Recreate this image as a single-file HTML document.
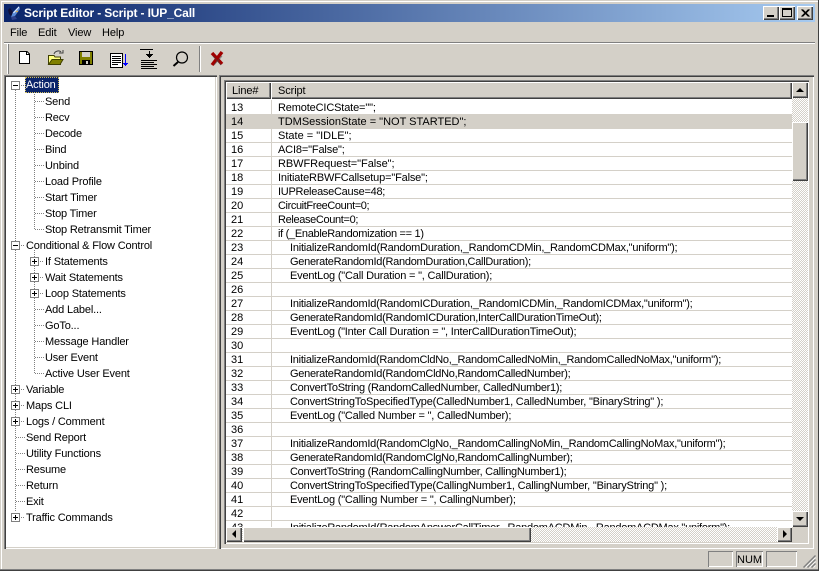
<!DOCTYPE html>
<html><head><meta charset="utf-8"><style>
html,body{margin:0;padding:0;width:819px;height:571px;overflow:hidden;background:#d4d0c8}
body{position:relative;font:11px/14px "Liberation Sans",sans-serif;color:#000}
div,span.a{position:absolute;box-sizing:border-box}
.t{white-space:nowrap}
#title{left:4px;top:4px;width:811px;height:18px;background:linear-gradient(90deg,#0a246a,#a6caf0)}
.cap{left:763px;top:6px;width:16px;height:14px;background:#d4d0c8;box-shadow:inset 1px 1px 0 #fff,inset -1px -1px 0 #404040,inset -2px -2px 0 #808080}
.m{top:26px;letter-spacing:-.1px}
.tree div{height:16px;line-height:16px;white-space:nowrap;letter-spacing:-.16px;margin-top:1px}
.c{left:45px}.p{left:26px}
#rows>div{position:relative;height:14px;border-bottom:1px solid #d4d0c8;white-space:nowrap;line-height:13px;width:566px}
#rows{left:0;top:0;width:566px}
#rows b{font-weight:normal;position:absolute;left:5px;top:1px}
#rows i{font-style:normal;position:absolute;left:52px;top:1px;letter-spacing:-.24px}
#rows i.n{left:64px}
.btn{background:#d4d0c8;box-shadow:inset 1px 1px 0 #fff,inset -1px -1px 0 #404040,inset -2px -2px 0 #808080}
.dith{background:conic-gradient(#fff 25%,#d4d0c8 0 50%,#fff 0 75%,#d4d0c8 0) 0 0/2px 2px}
.pane{top:551px;height:16px;box-shadow:inset 1px 1px 0 #808080,inset -1px -1px 0 #fff}
</style></head><body>
<div style="left:0;top:0;width:819px;height:1px;background:#d4d0c8"></div>
<div style="left:1px;top:1px;width:817px;height:1px;background:#fff"></div>
<div style="left:1px;top:1px;width:1px;height:568px;background:#fff"></div>
<div style="left:818px;top:0;width:1px;height:571px;background:#404040"></div>
<div style="left:0;top:570px;width:819px;height:1px;background:#404040"></div>
<div style="left:0;top:569px;width:818px;height:1px;background:#808080"></div>

<div id="title"></div>
<svg style="position:absolute;left:7px;top:5px" width="14" height="16"><path d="M3 3L6 7L5 12L2 9L1 5Z" fill="#10103a"/><path d="M12 1L6 7L4 12L8 11L13 4Z" fill="#5a8ad8"/><path d="M4 12L8 11L10 14L5 15Z" fill="#30408a"/><path d="M6.5 8L12 2" stroke="#e8f0ff" stroke-width="1"/><path d="M9 7l2-1" stroke="#e8b040"/></svg>
<div class="t" style="left:24px;top:6px;color:#fff;letter-spacing:-.15px;font:bold 12px/15px 'Liberation Sans',sans-serif">Script Editor - Script - IUP_Call</div>
<div class="cap" style="left:763px"><div style="left:4px;top:9px;width:7px;height:2px;background:#000"></div></div>
<div class="cap" style="left:779px"><div style="left:3px;top:2px;width:10px;height:9px;border:1px solid #000;border-top-width:2px"></div></div>
<div class="cap" style="left:797px"><svg style="position:absolute;left:4px;top:3px" width="9" height="8"><path d="M0.5 0.5L7.5 7.5M1.5 0.5L8.5 7.5M7.5 0.5L0.5 7.5M8.5 0.5L1.5 7.5" stroke="#000" stroke-width="1"/></svg></div>

<div class="m t" style="left:10px">File</div>
<div class="m t" style="left:38px">Edit</div>
<div class="m t" style="left:68px">View</div>
<div class="m t" style="left:102px">Help</div>

<div style="left:4px;top:42px;width:811px;height:1px;background:#808080"></div>
<div style="left:4px;top:43px;width:811px;height:1px;background:#fff"></div>
<div style="left:7px;top:44px;width:1px;height:30px;background:#fff"></div>
<div style="left:8px;top:44px;width:1px;height:30px;background:#808080"></div>

<svg style="position:absolute;left:0;top:44px" width="240" height="30" viewBox="0 44 240 30">
<!-- new -->
<path d="M19.5 51.5H27L29.5 54V63.5H19.5Z" fill="#fff" stroke="#000"/><path d="M26.5 51.5V54.5H29.5" fill="none" stroke="#000"/>
<!-- open -->
<path d="M48.5 55.5H54L55 57H60.5V64.5H48.5Z" fill="#ffff80" stroke="#404000"/>
<path d="M48.5 64.5L52 59.5H63L60 64.5Z" fill="#808000" stroke="#404000"/>
<path d="M54 54C55 51 59 50 61 52" fill="none" stroke="#404040"/><path d="M59 53H63V50" fill="none" stroke="#404040"/>
<!-- save -->
<path d="M79.5 51.5H92.5V64.5H79.5Z" fill="#808000" stroke="#000"/>
<rect x="82" y="52" width="8" height="5" fill="#d4d0c8"/><rect x="82" y="60" width="8" height="4" fill="#000"/><rect x="86" y="61" width="2" height="3" fill="#d4d0c8"/>
<!-- list+arrow -->
<path d="M110.5 53.5H122.5V67.5H110.5Z" fill="#fff" stroke="#000"/>
<path d="M112 56.5H121M112 58.5H121M112 60.5H121M112 62.5H121M112 64.5H118" stroke="#000"/>
<path d="M125.5 54V66" stroke="#0000ff"/><path d="M123 63.5H128M124 64.5H127M125 65.5H126" stroke="#0000ff" stroke-width="1"/>
<!-- indent -->
<path d="M140 49.5H153" stroke="#000"/>
<path d="M149.5 51V56" stroke="#000"/><path d="M146 54.5H153M147 55.5H152M148 56.5H151M149 57.5H150" stroke="#000"/>
<path d="M141 60.5H157M141 62.5H154M141 64.5H157M141 66.5H154M141 68.5H157" stroke="#000"/>
<!-- magnifier -->
<circle cx="182" cy="57.5" r="5.5" fill="none" stroke="#000" stroke-width="1.2"/><path d="M178 62L173.5 66" stroke="#000" stroke-width="2"/>
<!-- sep -->
<rect x="199" y="46" width="1" height="26" fill="#808080"/><rect x="200" y="46" width="1" height="26" fill="#fff"/>
<!-- red x -->
<path d="M212 53L222 64M222 52L212 65" stroke="#a00000" stroke-width="3.4"/><path d="M213 56L221 65M214 65L222 56" stroke="#404040" stroke-width="1" opacity=".55"/>
</svg>

<!-- Tree panel -->
<div style="left:4px;top:75px;width:213px;height:474px;background:#fff;box-shadow:inset 1px 1px 0 #808080,inset 2px 2px 0 #404040,inset -1px -1px 0 #fff,inset -2px -2px 0 #d4d0c8"></div>
<div class="tree" style="left:0;top:0;width:216px;height:548px">
<svg style="position:absolute;left:0;top:0" width="216" height="548">
<path d="M15.5 90V512M34.5 92V229M34.5 250V373" stroke="#808080" stroke-dasharray="1 1" fill="none" shape-rendering="crispEdges"/>
<path d="M21 85.5H25M35 101.5H44M35 117.5H44M35 133.5H44M35 149.5H44M35 165.5H44M35 181.5H44M35 197.5H44M35 213.5H44M35 229.5H44M21 245.5H25M40 261.5H44M40 277.5H44M40 293.5H44M35 309.5H44M35 325.5H44M35 341.5H44M35 357.5H44M35 373.5H44M21 389.5H25M21 405.5H25M21 421.5H25M16 437.5H25M16 453.5H25M16 469.5H25M16 485.5H25M16 501.5H25M21 517.5H25" stroke="#808080" stroke-dasharray="1 1" fill="none" shape-rendering="crispEdges"/>
<g fill="#fff" stroke="#808080" shape-rendering="crispEdges">
<rect x="11.5" y="81.5" width="8" height="8"/><rect x="11.5" y="241.5" width="8" height="8"/><rect x="30.5" y="257.5" width="8" height="8"/><rect x="30.5" y="273.5" width="8" height="8"/><rect x="30.5" y="289.5" width="8" height="8"/><rect x="11.5" y="385.5" width="8" height="8"/><rect x="11.5" y="401.5" width="8" height="8"/><rect x="11.5" y="417.5" width="8" height="8"/><rect x="11.5" y="513.5" width="8" height="8"/>
</g>
<path d="M13 85.5H18M13 245.5H18M32 261.5H37M34.5 259V264M32 277.5H37M34.5 275V280M32 293.5H37M34.5 291V296M13 389.5H18M15.5 387V392M13 405.5H18M15.5 403V408M13 421.5H18M15.5 419V424M13 517.5H18M15.5 515V520" stroke="#000" shape-rendering="crispEdges"/>
</svg>
<div style="left:25px;top:76px;width:34px;height:16px;background:#0a246a;color:#fff;line-height:16px;padding-left:1px;outline:1px dotted #d4c060;outline-offset:-1px">Action</div>
<div class="c" style="top:93px">Send</div>
<div class="c" style="top:109px">Recv</div>
<div class="c" style="top:125px">Decode</div>
<div class="c" style="top:141px">Bind</div>
<div class="c" style="top:157px">Unbind</div>
<div class="c" style="top:173px">Load Profile</div>
<div class="c" style="top:189px">Start Timer</div>
<div class="c" style="top:205px">Stop Timer</div>
<div class="c" style="top:221px">Stop Retransmit Timer</div>
<div class="p" style="top:237px">Conditional &amp; Flow Control</div>
<div class="c" style="top:253px">If Statements</div>
<div class="c" style="top:269px">Wait Statements</div>
<div class="c" style="top:285px">Loop Statements</div>
<div class="c" style="top:301px">Add Label...</div>
<div class="c" style="top:317px">GoTo...</div>
<div class="c" style="top:333px">Message Handler</div>
<div class="c" style="top:349px">User Event</div>
<div class="c" style="top:365px">Active User Event</div>
<div class="p" style="top:381px">Variable</div>
<div class="p" style="top:397px">Maps CLI</div>
<div class="p" style="top:413px">Logs / Comment</div>
<div class="p" style="top:429px">Send Report</div>
<div class="p" style="top:445px">Utility Functions</div>
<div class="p" style="top:461px">Resume</div>
<div class="p" style="top:477px">Return</div>
<div class="p" style="top:493px">Exit</div>
<div class="p" style="top:509px">Traffic Commands</div>
</div>

<!-- Right panel frames -->
<div style="left:219px;top:75px;width:595px;height:474px;box-shadow:inset 1px 1px 0 #808080,inset 2px 2px 0 #404040,inset -1px -1px 0 #fff,inset -2px -2px 0 #d4d0c8"></div>
<div style="left:224px;top:80px;width:585px;height:464px;box-shadow:inset 1px 1px 0 #808080,inset 2px 2px 0 #404040,inset -1px -1px 0 #fff,inset -2px -2px 0 #d4d0c8"></div>

<!-- grid -->
<div style="left:226px;top:100px;width:566px;height:427px;background:#fff;overflow:hidden">
<div style="left:45px;top:0;width:1px;height:427px;background:#d4d0c8"></div>
<div id="rows" style="top:1px">
<div><b>13</b><i style="letter-spacing:-.15px">RemoteCICState="";</i></div>
<div style="background:#d4d0c8"><b>14</b><i style="letter-spacing:0">TDMSessionState = "NOT STARTED";</i></div>
<div><b>15</b><i style="letter-spacing:0">State = "IDLE";</i></div>
<div><b>16</b><i style="letter-spacing:-.15px">ACI8="False";</i></div>
<div><b>17</b><i style="letter-spacing:-.05px">RBWFRequest="False";</i></div>
<div><b>18</b><i style="letter-spacing:-.17px">InitiateRBWFCallsetup="False";</i></div>
<div><b>19</b><i style="letter-spacing:-.27px">IUPReleaseCause=48;</i></div>
<div><b>20</b><i style="letter-spacing:-.4px">CircuitFreeCount=0;</i></div>
<div><b>21</b><i style="letter-spacing:-.35px">ReleaseCount=0;</i></div>
<div><b>22</b><i style="letter-spacing:-.3px">if (_EnableRandomization == 1)</i></div>
<div><b>23</b><i class="n" style="letter-spacing:-.225px">InitializeRandomId(RandomDuration,_RandomCDMin,_RandomCDMax,"uniform");</i></div>
<div><b>24</b><i class="n" style="letter-spacing:-.28px">GenerateRandomId(RandomDuration,CallDuration);</i></div>
<div><b>25</b><i class="n" style="letter-spacing:-.19px">EventLog ("Call Duration = ", CallDuration);</i></div>
<div><b>26</b></div>
<div><b>27</b><i class="n">InitializeRandomId(RandomICDuration,_RandomICDMin,_RandomICDMax,"uniform");</i></div>
<div><b>28</b><i class="n" style="letter-spacing:-.28px">GenerateRandomId(RandomICDuration,InterCallDurationTimeOut);</i></div>
<div><b>29</b><i class="n" style="letter-spacing:-.21px">EventLog ("Inter Call Duration = ", InterCallDurationTimeOut);</i></div>
<div><b>30</b></div>
<div><b>31</b><i class="n" style="letter-spacing:-.25px">InitializeRandomId(RandomCldNo,_RandomCalledNoMin,_RandomCalledNoMax,"uniform");</i></div>
<div><b>32</b><i class="n" style="letter-spacing:-.28px">GenerateRandomId(RandomCldNo,RandomCalledNumber);</i></div>
<div><b>33</b><i class="n" style="letter-spacing:-.27px">ConvertToString (RandomCalledNumber, CalledNumber1);</i></div>
<div><b>34</b><i class="n" style="letter-spacing:-.19px">ConvertStringToSpecifiedType(CalledNumber1, CalledNumber, "BinaryString" );</i></div>
<div><b>35</b><i class="n" style="letter-spacing:-.2px">EventLog ("Called Number = ", CalledNumber);</i></div>
<div><b>36</b></div>
<div><b>37</b><i class="n" style="letter-spacing:-.25px">InitializeRandomId(RandomClgNo,_RandomCallingNoMin,_RandomCallingNoMax,"uniform");</i></div>
<div><b>38</b><i class="n" style="letter-spacing:-.28px">GenerateRandomId(RandomClgNo,RandomCallingNumber);</i></div>
<div><b>39</b><i class="n" style="letter-spacing:-.27px">ConvertToString (RandomCallingNumber, CallingNumber1);</i></div>
<div><b>40</b><i class="n" style="letter-spacing:-.2px">ConvertStringToSpecifiedType(CallingNumber1, CallingNumber, "BinaryString" );</i></div>
<div><b>41</b><i class="n" style="letter-spacing:-.2px">EventLog ("Calling Number = ", CallingNumber);</i></div>
<div><b>42</b></div>
<div><b>43</b><i class="n">InitializeRandomId(RandomAnswerCallTimer,_RandomACDMin,_RandomACDMax,"uniform");</i></div>
</div>
</div>

<!-- header -->
<div style="left:226px;top:82px;width:566px;height:18px;background:#d4d0c8;border-bottom:1px solid #fff"></div>
<div class="btn" style="left:226px;top:82px;width:45px;height:17px"></div>
<div class="btn" style="left:271px;top:82px;width:521px;height:17px"></div>
<div class="t" style="left:232px;top:84px;letter-spacing:-.1px">Line#</div>
<div class="t" style="left:278px;top:84px;letter-spacing:-.1px">Script</div>

<!-- v scrollbar -->
<div class="dith" style="left:792px;top:97px;width:16px;height:414px"></div>
<div class="btn" style="left:792px;top:82px;width:16px;height:16px"><div style="left:4px;top:6px;width:0;height:0;border:4px solid transparent;border-top:0;border-bottom-color:#000"></div></div>
<div class="btn" style="left:792px;top:122px;width:16px;height:59px"></div>
<div class="btn" style="left:792px;top:511px;width:16px;height:16px"><div style="left:4px;top:6px;width:0;height:0;border:4px solid transparent;border-bottom:0;border-top-color:#000"></div></div>

<!-- h scrollbar -->
<div class="dith" style="left:242px;top:527px;width:535px;height:15px"></div>
<div class="btn" style="left:226px;top:527px;width:16px;height:15px"><div style="left:6px;top:3px;width:0;height:0;border:4px solid transparent;border-left:0;border-right-color:#000"></div></div>
<div class="btn" style="left:243px;top:527px;width:288px;height:15px"></div>
<div class="btn" style="left:777px;top:527px;width:15px;height:15px"><div style="left:6px;top:3px;width:0;height:0;border:4px solid transparent;border-right:0;border-left-color:#000"></div></div>
<div style="left:792px;top:527px;width:16px;height:15px;background:#d4d0c8"></div>

<!-- status bar -->
<div class="pane" style="left:708px;width:25px"></div>
<div class="pane" style="left:736px;width:27px"></div>
<div class="t" style="left:737px;top:553px">NUM</div>
<div class="pane" style="left:766px;width:31px"></div>
<svg style="position:absolute;left:802px;top:554px" width="14" height="14"><path d="M1.5 13.5L13.5 1.5M5.5 13.5L13.5 5.5M9.5 13.5L13.5 9.5" stroke="#808080" stroke-width="1.4" fill="none"/><path d="M3.5 13.5L13.5 3.5M7.5 13.5L13.5 7.5M11.5 13.5L13.5 11.5" stroke="#fff" stroke-width=".8" fill="none"/></svg>
</body></html>
